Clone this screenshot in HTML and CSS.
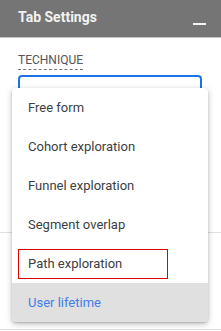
FILE: index.html
```html
<!DOCTYPE html>
<html lang="en">
<head>
    <meta charset="UTF-8">
    <meta name="viewport" content="width=device-width, initial-scale=1.0">
    <title>Tab Settings</title>
    <link rel="stylesheet" href="styles.css">
</head>
<body>
    <div class="panel">
        <div class="panel-head">
            <span class="panel-title">Tab Settings</span>
            <span class="minimize"></span>
        </div>

        <div class="panel-body">
            <div class="field-label">TECHNIQUE</div>
            <div class="select-box"></div>
            <div class="divider divider-1"></div>
            <div class="divider divider-2"></div>
        </div>

        <!-- Technique dropdown -->
        <ul class="menu">
            <li class="menu-item">Free form</li>
            <li class="menu-item">Cohort exploration</li>
            <li class="menu-item">Funnel exploration</li>
            <li class="menu-item">Segment overlap</li>
            <li class="menu-item"><span class="mark">Path exploration</span></li>
            <li class="menu-item selected">User lifetime</li>
        </ul>
    </div>
</body>
</html>
```

FILE: styles.css
```css
body {
    margin: 0;
    background: #fff;
    font-family: Roboto, 'Liberation Sans', Arial, sans-serif;
}

.panel {
    position: relative;
    width: 221px;
    height: 331px;
    overflow: hidden;
}

.panel-head {
    height: 37px;
    background: #757575;
    border-bottom: 1px solid #c4c4c4;
    display: flex;
    align-items: flex-start;
    justify-content: space-between;
    padding: 0 15px 0 18px;
}

.panel-title {
    margin-top: 9px;
    color: #f2f2f2;
    font-size: 14px;
    font-weight: bold;
    line-height: 16px;
}

.minimize {
    width: 13px;
    height: 2px;
    margin-top: 23px;
    background: #f5f5f5;
}

.panel-body {
    padding: 0 19px 0 18px;
}

.field-label {
    display: inline-block;
    margin-top: 15px;
    font-size: 12px;
    line-height: 14px;
    color: #555;
    padding-bottom: 2px;
    border-bottom: 1px dashed #777;
}

.select-box {
    margin-top: 5px;
    height: 40px;
    border: 2px solid #1a73e8;
    border-radius: 4px;
}

.divider {
    height: 1px;
    background: #e0e0e0;
    margin-left: -18px;
    margin-right: -19px;
}

.divider-1 {
    margin-top: 113px;
}

.divider-2 {
    margin-top: 96px;
}

.menu {
    position: absolute;
    top: 88px;
    left: 12px;
    width: 196px;
    margin: 0;
    padding: 0;
    list-style: none;
    background: #fff;
    border-radius: 4px;
    box-shadow: 0 2px 6px rgba(0, 0, 0, 0.25), 0 1px 2px rgba(0, 0, 0, 0.15);
    overflow: hidden;
}

.menu-item {
    height: 39px;
    display: flex;
    align-items: center;
    padding-left: 16px;
    font-size: 13px;
    color: #3c4043;
}

.mark {
    display: flex;
    align-items: center;
    margin-left: -10px;
    padding-left: 9px;
    width: 139px;
    height: 28px;
    border: 1px solid #e00000;
}

.selected {
    background: #e0e0e0;
    color: #3d7fe6;
}
```
